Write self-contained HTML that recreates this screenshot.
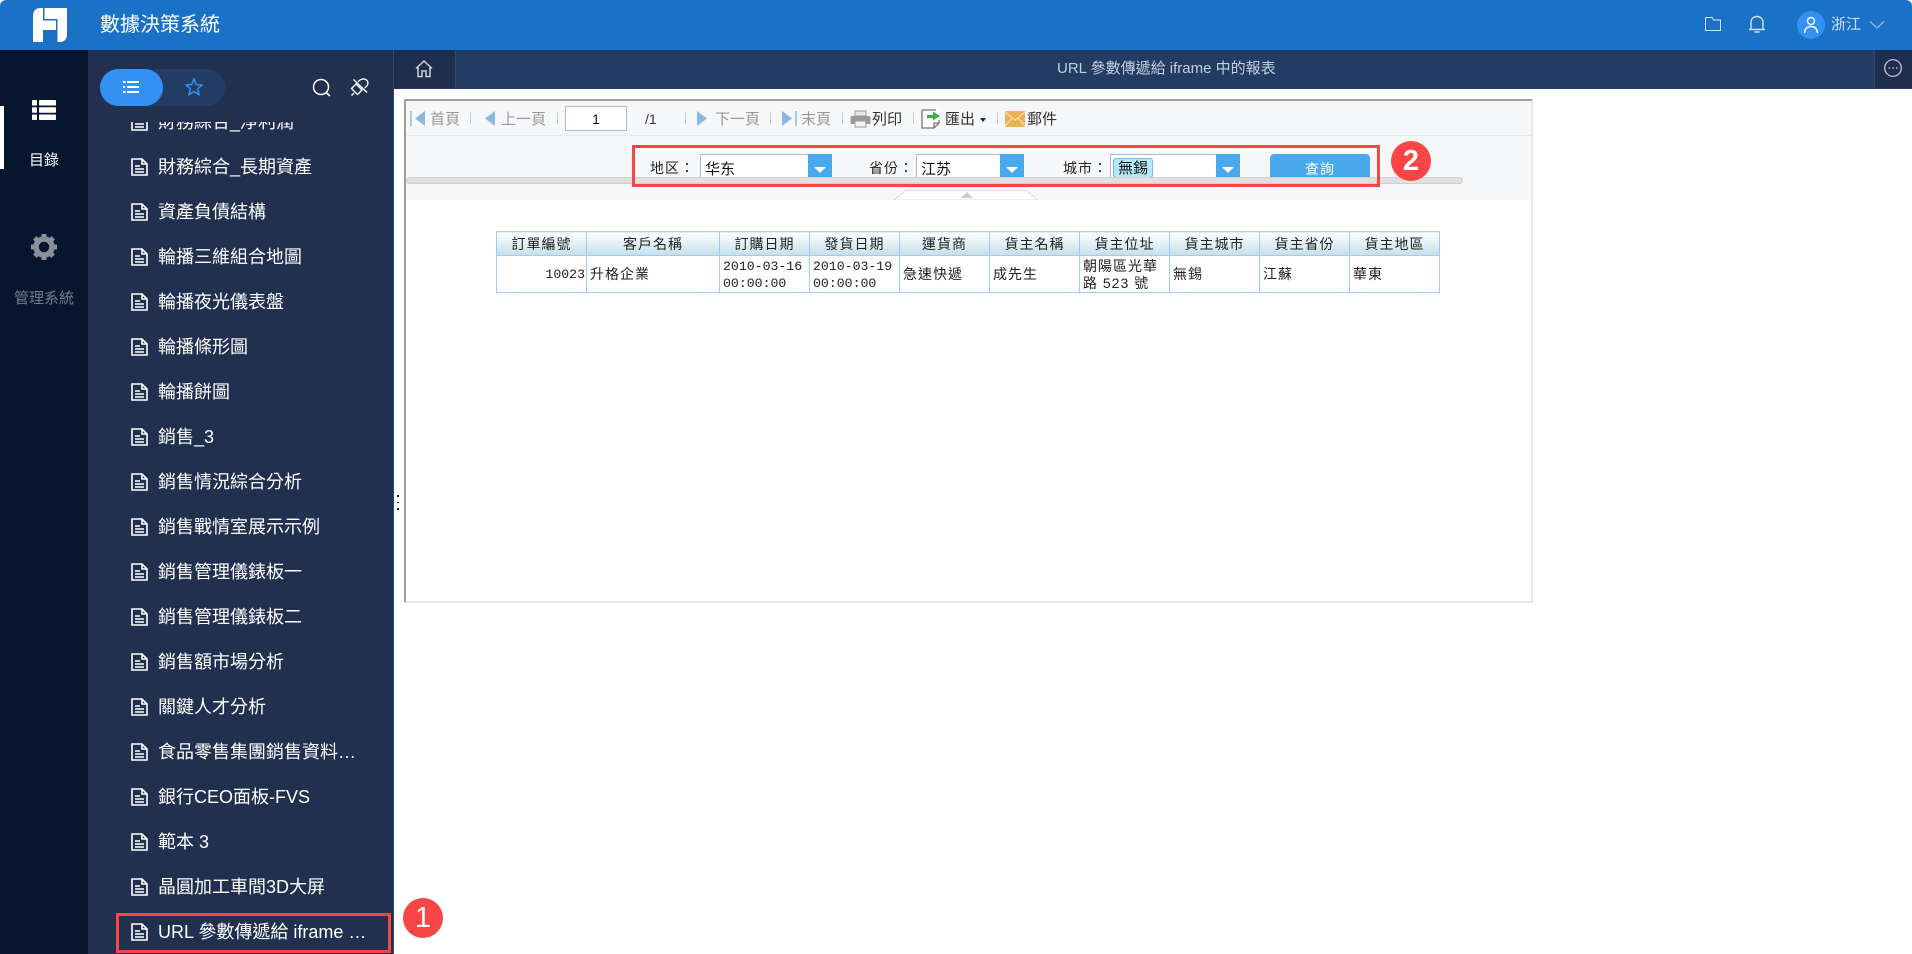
<!DOCTYPE html>
<html><head><meta charset="utf-8"><style>
*{box-sizing:border-box}
html,body{margin:0;padding:0;width:1912px;height:954px;overflow:hidden;background:#fff}
body{position:relative;font-family:"Liberation Sans","WenQuanYi Zen Hei","Noto Sans CJK TC",sans-serif}
.a{position:absolute}
.t{position:absolute;white-space:nowrap}
.it{position:absolute;left:158px;height:24px;line-height:24px;font-size:18px;color:#fff;white-space:nowrap}
.ic{position:absolute;left:131px;width:17px;height:18px}
.tb{position:absolute;top:108px;height:24px;line-height:24px;font-size:15px;white-space:nowrap;color:#999}
.tb.k{color:#333}
.sep{position:absolute;top:112px;width:1px;height:12px;background:#ccc}
.lb{position:absolute;top:156px;height:24px;line-height:24px;font-size:14px;letter-spacing:1px;color:#222;white-space:nowrap}
.cb{position:absolute;top:154px;height:24px;background:#fff;border:1px solid #b0b8cc;border-bottom:0}
.ar{position:absolute;top:154px;width:24px;height:24px;background:#4aa8ec}
.ar:after{content:"";position:absolute;left:6px;top:13px;border:6px solid transparent;border-top:6px solid #fff;border-bottom:0}
.v{position:absolute;top:158px;height:24px;line-height:24px;font-size:15px;color:#111;white-space:nowrap}
table{position:absolute;left:496px;top:231px;border-collapse:collapse;table-layout:fixed;width:944px;color:#222;font-size:14px}
td,th{border:1px solid #9fcbf5;padding:0 3px;font-weight:normal;letter-spacing:1px;overflow:hidden;white-space:nowrap}
th{height:24px;text-align:center;background:linear-gradient(#fdfefe,#c5dfec)}
td{height:37px;line-height:17px;padding-top:1px}
.m{font-family:"Liberation Mono","WenQuanYi Zen Hei",monospace;letter-spacing:0;font-size:13.2px}
</style></head><body>
<svg width="0" height="0" style="position:absolute"><defs>
<symbol id="doc" viewBox="0 0 17 18"><path d="M1 1H11L16 6V17H1Z M11 1V6H16" fill="none" stroke="#fff" stroke-width="1.6"/><path d="M4 8H9M4 11H13M4 14H13" stroke="#fff" stroke-width="1.5"/></symbol>
</defs></svg>

<!-- header -->
<div class="a" style="left:0;top:0;width:1912px;height:50px;background:#1a72c7;border-radius:6px 6px 0 0"></div>
<svg class="a" style="left:33px;top:8px" width="34" height="34" viewBox="0 0 34 34"><path d="M8 0H34V26Q34 34 26 34H0V8Q0 0 8 0Z" fill="#fff"/><path d="M10 0H11.500V11H24.500V34H10V22H23V12.500H10Z" fill="#1a72c7"/></svg>
<div class="t" style="left:100px;top:12px;line-height:26px;font-size:20px;color:#fff">數據決策系統</div>
<svg class="a" style="left:1705px;top:17px" width="16" height="14" viewBox="0 0 16 14"><path d="M.5.500H7L8.500 3H15.500V13.500H.5Z" fill="none" stroke="#d5e4f5"/></svg>
<svg class="a" style="left:1749px;top:15px" width="16" height="18" viewBox="0 0 16 18"><path d="M2 14V7.500C2 4 4.500 1.500 8 1.500S14 4 14 7.500V14M0 14.500H16M5.500 17H10.500" fill="none" stroke="#d5e4f5" stroke-width="1.400"/></svg>
<div class="a" style="left:1797px;top:11px;width:28px;height:28px;border-radius:50%;background:#3291f3"></div>
<svg class="a" style="left:1803px;top:16px" width="16" height="18" viewBox="0 0 16 18"><circle cx="8" cy="5" r="3.500" fill="none" stroke="#fff" stroke-width="1.400"/><path d="M1.500 17C2 12 5 10.500 8 10.500S14 12 14.500 17" fill="none" stroke="#fff" stroke-width="1.400"/></svg>
<div class="t" style="left:1831px;top:13px;line-height:24px;font-size:15px;color:#cfe0f4">浙江</div>
<svg class="a" style="left:1869px;top:20px" width="16" height="10" viewBox="0 0 16 10"><path d="M1 1.500L8 8L15 1.500" fill="none" stroke="#8fb9e6" stroke-width="1.300"/></svg>

<!-- rail -->
<div class="a" style="left:0;top:50px;width:88px;height:904px;background:#08152f"></div>
<div class="a" style="left:0;top:106px;width:4px;height:63px;background:#fff"></div>
<svg class="a" style="left:32px;top:100px" width="24" height="20" viewBox="0 0 24 20"><g fill="#fff"><rect width="5" height="5.500" y="0" rx=".8"/><rect x="7" width="17" height="5.500" rx=".8"/><rect y="7.300" width="5" height="5.500" rx=".8"/><rect x="7" y="7.300" width="17" height="5.500" rx=".8"/><rect y="14.500" width="5" height="5.500" rx=".8"/><rect x="7" y="14.500" width="17" height="5.500" rx=".8"/></g></svg>
<div class="t" style="left:29px;top:149px;line-height:24px;font-size:15px;color:#fff">目錄</div>
<svg class="a" style="left:31px;top:234px" width="26" height="26" viewBox="0 0 26 26"><circle cx="13" cy="13" r="8" fill="none" stroke="#8a8f9a" stroke-width="5.500"/><g stroke="#8a8f9a" stroke-width="5"><path d="M13 0V5M13 21V26M0 13H5M21 13H26M3.800 3.800L7.300 7.300M18.700 18.700L22.200 22.200M22.200 3.800L18.700 7.300M7.300 18.700L3.800 22.200"/></g></svg>
<div class="t" style="left:14px;top:287px;line-height:24px;font-size:15px;color:#6f7a8c">管理系統</div>

<!-- sidebar -->
<div class="a" style="left:88px;top:50px;width:305px;height:904px;background:#22304f"></div>
<div class="a" style="left:100px;top:69px;width:125px;height:37px;border-radius:19px;background:#243d64"></div>
<div class="a" style="left:100px;top:69px;width:63px;height:37px;border-radius:19px;background:#3291f3"></div>
<svg class="a" style="left:123px;top:81px" width="16" height="13" viewBox="0 0 16 13"><g fill="#fff"><rect width="2.500" height="2" y="0"/><rect x="4" width="12" height="2"/><rect y="5" width="2" height="2"/><rect x="4" y="5" width="12" height="2"/><rect y="10" width="2.500" height="2"/><rect x="4" y="10" width="12" height="2"/></g></svg>
<svg class="a" style="left:185px;top:78px" width="18" height="18" viewBox="0 0 18 18"><path d="M9 1L11.300 6.500L17 7L12.700 10.800L14 16.500L9 13.500L4 16.500L5.300 10.800L1 7L6.700 6.500Z" fill="none" stroke="#3291f3" stroke-width="1.500"/></svg>
<svg class="a" style="left:312px;top:78px" width="20" height="19" viewBox="0 0 20 19"><circle cx="9" cy="9" r="7.500" fill="none" stroke="#fff" stroke-width="1.500"/><path d="M14 14.500L18 18" stroke="#fff" stroke-width="1.500"/></svg>
<svg class="a" style="left:350px;top:78px" width="19" height="19" viewBox="0 0 19 19"><g fill="none" stroke="#fff" stroke-width="1.400"><path d="M1.500 10.500L7.500 16.500L12 12L6 6Z"/><path d="M8 4C10 1 14 0 16.500 2S18 8 14.500 10"/><path d="M3.500 1.500L17 14.500"/><path d="M1.500 17.500L4 15"/></g></svg>

<div class="a" style="left:88px;top:122px;width:305px;height:832px;overflow:hidden">
<div style="position:absolute;left:-88px;top:-122px;width:393px;height:954px">
<svg class="ic" style="top:113px"><use href="#doc"/></svg><div class="it" style="top:110px">財務綜合_淨利潤</div>
<svg class="ic" style="top:158px"><use href="#doc"/></svg><div class="it" style="top:155px">財務綜合_長期資產</div>
<svg class="ic" style="top:203px"><use href="#doc"/></svg><div class="it" style="top:200px">資產負債結構</div>
<svg class="ic" style="top:248px"><use href="#doc"/></svg><div class="it" style="top:245px">輪播三維組合地圖</div>
<svg class="ic" style="top:293px"><use href="#doc"/></svg><div class="it" style="top:290px">輪播夜光儀表盤</div>
<svg class="ic" style="top:338px"><use href="#doc"/></svg><div class="it" style="top:335px">輪播條形圖</div>
<svg class="ic" style="top:383px"><use href="#doc"/></svg><div class="it" style="top:380px">輪播餅圖</div>
<svg class="ic" style="top:428px"><use href="#doc"/></svg><div class="it" style="top:425px">銷售_3</div>
<svg class="ic" style="top:473px"><use href="#doc"/></svg><div class="it" style="top:470px">銷售情況綜合分析</div>
<svg class="ic" style="top:518px"><use href="#doc"/></svg><div class="it" style="top:515px">銷售戰情室展示示例</div>
<svg class="ic" style="top:563px"><use href="#doc"/></svg><div class="it" style="top:560px">銷售管理儀錶板一</div>
<svg class="ic" style="top:608px"><use href="#doc"/></svg><div class="it" style="top:605px">銷售管理儀錶板二</div>
<svg class="ic" style="top:653px"><use href="#doc"/></svg><div class="it" style="top:650px">銷售額市場分析</div>
<svg class="ic" style="top:698px"><use href="#doc"/></svg><div class="it" style="top:695px">關鍵人才分析</div>
<svg class="ic" style="top:743px"><use href="#doc"/></svg><div class="it" style="top:740px">食品零售集團銷售資料…</div>
<svg class="ic" style="top:788px"><use href="#doc"/></svg><div class="it" style="top:785px">銀行CEO面板-FVS</div>
<svg class="ic" style="top:833px"><use href="#doc"/></svg><div class="it" style="top:830px">範本 3</div>
<svg class="ic" style="top:878px"><use href="#doc"/></svg><div class="it" style="top:875px">晶圓加工車間3D大屏</div>
<svg class="ic" style="top:923px"><use href="#doc"/></svg><div class="it" style="top:920px">URL 參數傳遞給 iframe …</div>
</div></div>
<div class="a" style="left:116px;top:913px;width:275px;height:40px;border:3px solid #f94545"></div>
<div class="a" style="left:403px;top:898px;width:40px;height:40px;border-radius:50%;background:#f94545;color:#fff;font-size:29px;line-height:40px;text-align:center">1</div>

<!-- tab bar -->
<div class="a" style="left:393px;top:50px;width:1519px;height:39px;background:#223c63"></div>
<div class="a" style="left:393px;top:50px;width:1px;height:904px;background:#33476a"></div>
<div class="a" style="left:394px;top:50px;width:62px;height:38px;background:#1f2e4d;border-right:1px solid #33476a"></div>
<svg class="a" style="left:415px;top:60px" width="18" height="18" viewBox="0 0 18 18"><path d="M1 8.500L9 1L17 8.500M3 7V16.500H7V11H11V16.500H15V7" fill="none" stroke="#c9d2de" stroke-width="1.500"/></svg>
<div class="t" style="left:1057px;top:58px;line-height:22px;font-size:15px;color:#c5cfdc">URL 參數傳遞給 iframe 中的報表</div>
<div class="a" style="left:1874px;top:50px;width:38px;height:38px;background:#1f2e4d;border-left:1px solid #33476a"></div>
<svg class="a" style="left:1884px;top:59px" width="18" height="18" viewBox="0 0 18 18"><circle cx="9" cy="9" r="8.300" fill="none" stroke="#c9d2de" stroke-width="1.200"/><path d="M4.500 9H6M8.200 9H9.800M12 9H13.500" stroke="#c9d2de" stroke-width="1.200"/></svg>

<!-- splitter dots -->
<div class="a" style="left:397px;top:495px;width:2px;height:2px;background:#0b2244"></div>
<div class="a" style="left:397px;top:502px;width:2px;height:1px;background:#0b2244"></div>
<div class="a" style="left:397px;top:508px;width:2px;height:2px;background:#0b2244"></div>
<div class="a" style="left:389px;top:495px;width:2px;height:2px;background:#1a2a45"></div>
<div class="a" style="left:389px;top:502px;width:2px;height:1px;background:#1a2a45"></div>
<div class="a" style="left:389px;top:508px;width:2px;height:2px;background:#1a2a45"></div>

<!-- report frame -->
<div class="a" style="left:404px;top:99px;width:1129px;height:504px;background:#fff;border-style:solid;border-width:2px 2px 2px 2px;border-color:#9e9e9e #e8e8e8 #e8e8e8 #9e9e9e"></div>
<div class="a" style="left:406px;top:101px;width:1125px;height:99px;background:#f6f7f9"></div>
<div class="a" style="left:406px;top:135px;width:1125px;height:1px;background:#e6e7e9"></div>

<!-- toolbar -->
<svg class="a" style="left:410px;top:111px" width="16" height="15" viewBox="0 0 16 15"><rect width="2" height="15" fill="#a9c9e6"/><path d="M15 0V15L5 7.500Z" fill="#8ab8e2"/></svg>
<div class="tb" style="left:430px">首頁</div><div class="sep" style="left:470px"></div>
<svg class="a" style="left:484px;top:111px" width="12" height="15" viewBox="0 0 12 15"><path d="M11 0V15L1 7.500Z" fill="#8ab8e2"/></svg>
<div class="tb" style="left:501px">上一頁</div><div class="sep" style="left:557px"></div>
<div class="a" style="left:565px;top:106px;width:62px;height:25px;background:#fff;border:1px solid #b0b8cc;text-align:center;font-size:14px;line-height:24px;color:#111">1</div>
<div class="tb k" style="left:645px;top:107px;font-size:14px">/1</div><div class="sep" style="left:685px"></div>
<svg class="a" style="left:696px;top:111px" width="12" height="15" viewBox="0 0 12 15"><path d="M1 0V15L11 7.500Z" fill="#8ab8e2"/></svg>
<div class="tb" style="left:715px">下一頁</div><div class="sep" style="left:770px"></div>
<svg class="a" style="left:781px;top:111px" width="16" height="15" viewBox="0 0 16 15"><path d="M1 0V15L11 7.500Z" fill="#8ab8e2"/><rect x="14" width="2" height="15" fill="#a9c9e6"/></svg>
<div class="tb" style="left:801px">末頁</div><div class="sep" style="left:842px"></div>
<svg class="a" style="left:850px;top:110px" width="21" height="18" viewBox="0 0 21 18"><path d="M5 1H16V6H5Z" fill="#e8e8e8" stroke="#999"/><path d="M2 6H19Q20.500 6 20.500 8V14H16V11H5V14H.5V8Q.5 6 2 6Z" fill="#9a9a9a"/><path d="M5 11H16V17H5Z" fill="#f4f4f4" stroke="#999"/></svg>
<div class="tb k" style="left:872px">列印</div><div class="sep" style="left:913px"></div>
<svg class="a" style="left:921px;top:109px" width="20" height="20" viewBox="0 0 20 20"><path d="M1 1H18V14L13 19H1Z" fill="#fff"/><path d="M1 1H15M1 1V19H13L18 14V11M13 19V14H18" fill="none" stroke="#777" stroke-width="1.300"/><path d="M6 6H12V2.500L19 7L12 11.500V9H6Z" fill="#3fae49"/></svg>
<div class="tb k" style="left:945px">匯出</div>
<div class="a" style="left:980px;top:118px;border:3.500px solid transparent;border-top:4px solid #222;border-bottom:0"></div>
<div class="sep" style="left:997px"></div>
<svg class="a" style="left:1005px;top:111px" width="20" height="16" viewBox="0 0 20 16"><rect width="20" height="16" rx="1" fill="#ecb056"/><path d="M0 1L10 9L20 1M0 15L7 7M20 15L13 7" fill="none" stroke="#f8dcae" stroke-width="1.300"/></svg>
<div class="tb k" style="left:1027px">郵件</div>

<!-- param -->
<div class="lb" style="left:650px">地区：</div>
<div class="cb" style="left:700px;width:132px"></div><div class="ar" style="left:808px"></div>
<div class="v" style="left:705px">华东</div>
<div class="lb" style="left:869px">省份：</div>
<div class="cb" style="left:916px;width:108px"></div><div class="ar" style="left:1000px"></div>
<div class="v" style="left:921px">江苏</div>
<div class="lb" style="left:1063px">城市：</div>
<div class="cb" style="left:1110px;width:130px"></div><div class="ar" style="left:1216px"></div>
<div class="a" style="left:1113px;top:158px;width:40px;height:20px;background:#b8e8fb;border:1px solid #6fbdf0;border-radius:3px"></div>
<div class="v" style="left:1118px;top:157px">無錫</div>
<div class="a" style="left:1270px;top:154px;width:100px;height:24px;background:#4aa8ec;border-radius:4px 4px 0 0;color:#fff;text-align:center;font-size:14px;line-height:30px;letter-spacing:1px;overflow:hidden">查詢</div>
<div class="a" style="left:406px;top:177px;width:1057px;height:7px;background:#e0e0e0;border:1px solid #d0d0d0;border-radius:4px"></div>
<svg class="a" style="left:893px;top:190px" width="146" height="10" viewBox="0 0 146 10"><path d="M1 10L13 .5H133L145 10Z" fill="#fff" stroke="#ddd"/><path d="M68 8L74 2L80 8Z" fill="#ccc"/></svg>

<!-- table -->
<table><colgroup><col style="width:90px"><col style="width:133px"><col style="width:90px"><col style="width:90px"><col style="width:90px"><col style="width:90px"><col style="width:90px"><col style="width:90px"><col style="width:90px"><col style="width:90px"></colgroup>
<tr><th>訂單編號</th><th>客戶名稱</th><th>訂購日期</th><th>發貨日期</th><th>運貨商</th><th>貨主名稱</th><th>貨主位址</th><th>貨主城市</th><th>貨主省份</th><th>貨主地區</th></tr>
<tr><td class="m" style="text-align:right;padding-right:1px">10023</td><td>升格企業</td><td class="m">2010-03-16<br>00:00:00</td><td class="m">2010-03-19<br>00:00:00</td><td>急速快遞</td><td>成先生</td><td>朝陽區光華<br>路 523 號</td><td>無錫</td><td>江蘇</td><td>華東</td></tr>
</table>

<div class="a" style="left:632px;top:145px;width:748px;height:42px;border:3px solid #f94545"></div>
<div class="a" style="left:1391px;top:141px;width:40px;height:40px;border-radius:50%;background:#f94545;color:#fff;font-size:29px;font-weight:bold;line-height:40px;text-align:center">2</div>
</body></html>
